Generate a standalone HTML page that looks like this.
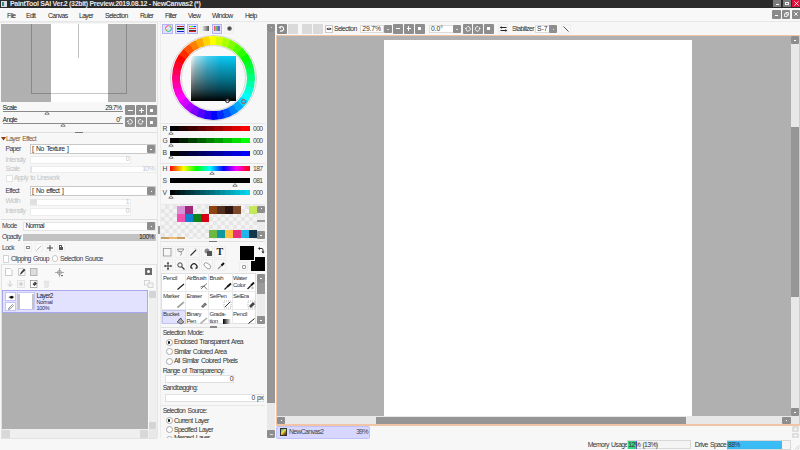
<!DOCTYPE html>
<html><head><meta charset="utf-8">
<style>
*{box-sizing:border-box}
html,body{margin:0;padding:0}
body{width:800px;height:450px;overflow:hidden;position:relative;background:#f7f7f7;font-family:"Liberation Sans",sans-serif}
.a{position:absolute}
.t{position:absolute;font-size:6.8px;line-height:8.6px;letter-spacing:-0.6px;word-spacing:1px;white-space:nowrap;color:#1e1e1e}
.r{text-align:right}
.d{color:#c4c4c4}
.gb{position:absolute;background:#8e8e8e;border-radius:1px}
.lb{position:absolute;background:#dcdcdc;border-radius:1px}
.sel{position:absolute;background:#e0e0ff;border:1px solid #b4b4f4}
.box{position:absolute;background:#fff;border:1px solid #d4d4d4}
.sep{position:absolute;height:1px;background:#dedede}
svg{position:absolute;overflow:visible}
</style></head><body>

<!-- TITLE BAR -->
<div class="a" style="left:0;top:0;width:800px;height:8px;background:#2b2b2b"></div>
<div class="a" style="left:1px;top:1px;width:6px;height:6px;background:#d8dde4"></div>
<div class="a" style="left:2px;top:2px;width:2px;height:4px;background:#3c8a8c"></div>
<div class="t" style="left:10px;top:0px;color:#e8e8e8;font-size:7px;font-weight:bold;letter-spacing:-0.31px;word-spacing:0;line-height:8px">PaintTool SAI Ver.2 (32bit) Preview.2019.08.12 - NewCanvas2 (*)</div>
<div class="a" style="left:773px;top:0;width:8px;height:7px;background:#7c7c7c"></div>
<div class="a" style="left:776px;top:4px;width:2.5px;height:1px;background:#fff"></div>
<div class="a" style="left:782.5px;top:0;width:8.5px;height:7px;background:#7c7c7c"></div>
<div class="a" style="left:785px;top:1.5px;width:4px;height:3.5px;border:0.9px solid #f0f0f0"></div>
<div class="a" style="left:792px;top:0;width:8px;height:7px;background:#e0103c"></div>
<svg style="left:794px;top:1px" width="5" height="5"><path d="M0.5 0.5 L4.5 4.5 M4.5 0.5 L0.5 4.5" stroke="#fff" stroke-width="0.9"/></svg>
<!-- MENU BAR -->
<div class="a" style="left:0;top:8px;width:800px;height:13px;background:#f8f8f8"></div>
<div class="a" style="left:0;top:21px;width:800px;height:1px;background:#e8e8e8"></div>
<div class="t" style="left:7px;top:11.5px">File</div>
<div class="t" style="left:26px;top:11.5px">Edit</div>
<div class="t" style="left:48px;top:11.5px">Canvas</div>
<div class="t" style="left:79px;top:11.5px">Layer</div>
<div class="t" style="left:105px;top:11.5px">Selection</div>
<div class="t" style="left:140px;top:11.5px">Ruler</div>
<div class="t" style="left:165px;top:11.5px">Filter</div>
<div class="t" style="left:188px;top:11.5px">View</div>
<div class="t" style="left:212px;top:11.5px">Window</div>
<div class="t" style="left:245px;top:11.5px">Help</div>
<div class="gb" style="left:772.3px;top:10px;width:8.5px;height:8.7px;background:#8a8a8a"></div>
<div class="a" style="left:775px;top:15px;width:3px;height:1px;background:#fff"></div>
<div class="gb" style="left:782px;top:10px;width:8px;height:8.7px;background:#8a8a8a"></div>
<svg style="left:783.5px;top:11.5px" width="5" height="5"><path d="M0.5 1.8 H3.2 V4.5 H0.5 Z M1.8 1.8 V0.5 H4.5 V3.2 H3.2" fill="none" stroke="#fff" stroke-width="0.8"/></svg>
<div class="gb" style="left:792px;top:10px;width:8px;height:8.7px;background:#8a8a8a"></div>
<svg style="left:794px;top:12.3px" width="4" height="4"><path d="M0.3 0.3 L3.7 3.7 M3.7 0.3 L0.3 3.7" stroke="#fff" stroke-width="0.9"/></svg>

<!-- LEFT PANEL -->

<!-- navigator -->
<div class="a" style="left:0;top:22px;width:158px;height:1px;background:#ececec"></div>
<div class="a" style="left:1px;top:24px;width:155px;height:78px;background:#b0b0b0;overflow:hidden">
  <div class="a" style="left:50px;top:0;width:57px;height:79px;background:#fff"></div>
  <div class="a" style="left:30px;top:-5px;width:96px;height:75px;border:1px solid rgba(0,0,0,0.22)"></div>
  <div class="a" style="left:77px;top:0;width:1px;height:34px;background:rgba(0,0,0,0.25)"></div>
</div>
<div class="t" style="left:2.5px;top:103.5px">Scale</div>
<div class="t r" style="left:88.5px;width:33px;top:103.5px">29.7%</div>
<div class="a" style="left:2.5px;top:111px;width:120px;height:1px;background:#8a8a8a"></div>
<svg style="left:44px;top:111px" width="6" height="4"><path d="M0.8 3.2 L3 0.6 L5.2 3.2 Z" fill="#fff" stroke="#444" stroke-width="0.7"/></svg>
<div class="gb" style="left:125px;top:105px;width:10px;height:10px"></div>
<div class="a" style="left:128px;top:109.5px;width:5px;height:1px;background:#fff"></div>
<div class="gb" style="left:136px;top:105px;width:10px;height:10px"></div>
<div class="a" style="left:139px;top:109.5px;width:5px;height:1.2px;background:#fff"></div>
<div class="a" style="left:141px;top:107.5px;width:1.2px;height:5px;background:#fff"></div>
<div class="gb" style="left:147px;top:105px;width:10px;height:10px"></div>
<div class="a" style="left:150px;top:108.5px;width:3px;height:3px;background:#fff"></div>
<div class="t" style="left:2.5px;top:115.5px">Angle</div>
<div class="t r" style="left:88.5px;width:33px;top:115.5px">0°</div>
<div class="a" style="left:2.5px;top:123px;width:120px;height:1px;background:#8a8a8a"></div>
<svg style="left:60px;top:123px" width="6" height="4"><path d="M0.8 3.2 L3 0.6 L5.2 3.2 Z" fill="#fff" stroke="#444" stroke-width="0.7"/></svg>
<div class="gb" style="left:125px;top:117px;width:10px;height:10px"></div>
<svg style="left:125px;top:117px" width="10" height="10"><path d="M4.4 2.6 A2.3 2.3 0 1 1 3.2 6.3" fill="none" stroke="#fff" stroke-width="0.9"/><path d="M1.8 4.5 L3.6 3 L3.6 6Z" fill="#fff"/></svg>
<div class="gb" style="left:136px;top:117px;width:10px;height:10px"></div>
<svg style="left:136px;top:117px" width="10" height="10"><path d="M5.1 2.6 A2.3 2.3 0 1 0 6.3 6.3" fill="none" stroke="#fff" stroke-width="0.9"/><path d="M7.7 4.5 L5.9 3 L5.9 6Z" fill="#fff"/></svg>
<div class="gb" style="left:147px;top:117px;width:10px;height:10px"></div>
<div class="a" style="left:150px;top:120.5px;width:3px;height:3px;background:#fff"></div>

<div class="sep" style="left:1px;top:132px;width:156px"></div>
<div class="a" style="left:75px;top:131.5px;width:8px;height:1.5px;background:#777"></div>

<!-- layer effect -->
<svg style="left:1px;top:137px" width="5" height="4"><path d="M0 0 L5 0 L2.5 3.5 Z" fill="#8b3a10"/></svg>
<div class="t" style="left:6px;top:134.6px;color:#8a5a30">Layer Effect</div>
<div class="t" style="left:5.5px;top:144.6px;color:#3a3a4a">Paper</div>
<div class="box" style="left:29.5px;top:144px;width:126px;height:9.5px;border-color:#c8c8c8"></div>
<div class="t" style="left:32px;top:144.6px;word-spacing:1.5px">[ No Texture ]</div>
<div class="gb" style="left:147px;top:145px;width:8px;height:8px"></div>
<div class="a" style="left:150px;top:148.5px;width:2px;height:1px;background:#fff"></div>
<div class="t d" style="left:5.5px;top:155.5px">Intensity</div>
<div class="box" style="left:29.5px;top:156px;width:101px;height:7.5px;border-color:#ececec"></div>
<div class="t d r" style="left:110px;width:19px;top:155px">0</div>
<div class="t d" style="left:5.5px;top:164.5px">Scale</div>
<div class="box" style="left:29.5px;top:165.5px;width:126px;height:7.5px;border-color:#ececec"></div>
<div class="a" style="left:30px;top:166px;width:2px;height:6.5px;background:#e4e4e4"></div>
<div class="t d r" style="left:130px;width:24px;top:164.5px">10%</div>
<div class="box" style="left:5.5px;top:174.5px;width:7px;height:7.5px;border-color:#e4e4e4"></div>
<div class="t d" style="left:14px;top:174px">Apply to Linework</div>

<div class="t" style="left:5.5px;top:187.3px;color:#3a3a4a">Effect</div>
<div class="box" style="left:29.5px;top:186px;width:126px;height:10px;border-color:#c8c8c8"></div>
<div class="t" style="left:32px;top:187.3px;word-spacing:1.5px">[ No effect ]</div>
<div class="gb" style="left:147px;top:187px;width:8px;height:8px"></div>
<div class="a" style="left:150.5px;top:190.5px;width:1.5px;height:1px;background:#fff"></div>
<div class="t d" style="left:5.5px;top:197.2px">Width</div>
<div class="box" style="left:29.5px;top:198.5px;width:101px;height:7px;border-color:#ececec"></div>
<div class="a" style="left:30px;top:199px;width:6.5px;height:6px;background:#e0e0e0"></div>
<div class="t d r" style="left:110px;width:19px;top:197.5px">1</div>
<div class="t d" style="left:5.5px;top:207.3px">Intensity</div>
<div class="box" style="left:29.5px;top:208px;width:101px;height:7.5px;border-color:#ececec"></div>
<div class="t d r" style="left:110px;width:19px;top:207px">0</div>

<div class="sep" style="left:1px;top:219px;width:156px"></div>
<div class="t" style="left:2px;top:222px;color:#3a3a4a">Mode</div>
<div class="box" style="left:23px;top:221.5px;width:132.5px;height:9px;border-color:#e4e4e4"></div>
<div class="t" style="left:25.5px;top:222px">Normal</div>
<div class="gb" style="left:147px;top:222px;width:8px;height:8px"></div>
<div class="a" style="left:150.5px;top:225.5px;width:1.5px;height:1px;background:#fff"></div>
<div class="t" style="left:2px;top:232.6px;color:#3a3a4a">Opacity</div>
<div class="a" style="left:23px;top:234px;width:132.5px;height:6.5px;background:#c2c2c2"></div>
<div class="t r" style="left:120px;width:34px;top:233px">100%</div>
<div class="t" style="left:2px;top:243.6px;color:#3a3a4a">Lock</div>
<div class="a" style="left:23.5px;top:243px;width:8px;height:9px;border:1px solid #eee;background:#f9f9f9"></div>
<div class="a" style="left:34.5px;top:243px;width:8.5px;height:9px;border:1px solid #eee;background:#f9f9f9"></div>
<div class="a" style="left:45.5px;top:243px;width:9px;height:9px;border:1px solid #eee;background:#f9f9f9"></div>
<div class="a" style="left:56.5px;top:243px;width:8.5px;height:9px;border:1px solid #eee;background:#f9f9f9"></div>
<div class="a" style="left:25.5px;top:245.5px;width:4px;height:3px;border:1px solid #888"></div>
<svg style="left:36px;top:244.5px" width="6" height="6"><path d="M0.5 5.5 L5 1" stroke="#bbb" stroke-width="1"/></svg>
<svg style="left:47px;top:244.5px" width="6" height="6"><path d="M3 0 V6 M0 3 H6" stroke="#333" stroke-width="0.9"/></svg>
<div class="a" style="left:58.5px;top:247px;width:4px;height:3px;background:#555"></div>
<div class="a" style="left:59.3px;top:245px;width:2.5px;height:3px;border:1px solid #555;border-bottom:none;border-radius:1px 1px 0 0"></div>
<div class="box" style="left:2.5px;top:254.5px;width:6.5px;height:8px;border-color:#d4d4d4"></div>
<div class="t" style="left:11px;top:254.6px;color:#3a3a4a">Clipping Group</div>
<div class="a" style="left:51.5px;top:255px;width:6.5px;height:6.5px;border:1px solid #c8c8c8;border-radius:50%;background:#fff"></div>
<div class="t" style="left:60px;top:254.6px;color:#3a3a4a">Selection Source</div>
<div class="sep" style="left:1px;top:264px;width:156px;background:#e2e2e2"></div>

<!-- layer toolbar -->
<div class="a" style="left:1px;top:264.5px;width:156px;height:174px;border:1px solid #e2e2e2;border-top:none;background:#f9f9f9"></div>
<svg style="left:5px;top:268px" width="8" height="8"><path d="M0.5 0.5 H5 L7 2.5 V7.5 H0.5 Z" fill="#fff" stroke="#aaa" stroke-width="0.6"/></svg>
<svg style="left:17.5px;top:268px" width="8" height="8"><path d="M0.5 0.5 H5 L7 2.5 V7.5 H0.5 Z" fill="#fff" stroke="#aaa" stroke-width="0.6"/><path d="M1.5 7 L3 4 L6 0.5 L7.5 2 L4 5.5 Z" fill="#444"/></svg>
<svg style="left:30px;top:268px" width="8" height="8"><rect x="0.5" y="0.5" width="6.5" height="7" fill="#ddd" stroke="#aaa" stroke-width="0.8"/></svg>
<svg style="left:55px;top:267.5px" width="9" height="9"><path d="M4.5 0 V9 M0 4.5 H9" stroke="#999" stroke-width="0.8"/><circle cx="4.5" cy="4.5" r="2" fill="none" stroke="#888" stroke-width="0.8"/><path d="M6 7 L8 7 L7 8.5Z" fill="#222"/></svg>
<div class="a" style="left:145px;top:268px;width:7px;height:7px;background:#6a6a6a"></div>
<div class="a" style="left:147px;top:270px;width:3px;height:3px;background:#fff;border-radius:50%"></div>
<svg style="left:5.5px;top:279.5px" width="8" height="8"><path d="M4 0.5 V6 M1.5 4 L4 6.5 L6.5 4" stroke="#ccc" stroke-width="1" fill="none"/></svg>
<svg style="left:17px;top:279.5px" width="8" height="8"><rect x="0.5" y="0.5" width="7" height="7" fill="#f4f4f4" stroke="#e0e0e0" stroke-width="0.8"/><path d="M4 2 V6 M2 4 H6" stroke="#bbb" stroke-width="0.8"/></svg>
<svg style="left:30px;top:279.5px" width="8" height="8"><rect x="0.5" y="0.5" width="6.5" height="7" fill="#fff" stroke="#777" stroke-width="0.6"/><path d="M2.5 4 L5 1.5 L7 3.5 L4.5 6 Z" fill="#333"/><path d="M3.5 4 L5 2.5" stroke="#fff" stroke-width="0.5"/></svg>
<svg style="left:42.5px;top:279.5px" width="8" height="8"><path d="M0.5 1.3 H6.5" stroke="#ddd" stroke-width="0.8"/><path d="M1.2 2 L1.8 7.5 H5.2 L5.8 2 Z" fill="#e8e8e8" stroke="#dcdcdc" stroke-width="0.5"/></svg>
<svg style="left:144px;top:279.5px" width="10" height="8"><rect x="0.5" y="0.5" width="5" height="4.5" fill="none" stroke="#ccc" stroke-width="0.8"/><rect x="4" y="3" width="5" height="4.5" fill="#f4f4f4" stroke="#ccc" stroke-width="0.8"/></svg>

<!-- layer list -->
<div class="a" style="left:2px;top:290px;width:146px;height:139px;background:#b0b0b0"></div>
<div class="a" style="left:2px;top:290px;width:146px;height:23px;background:#e2e2ff;border:1px solid #a8a8ee"></div>
<div class="a" style="left:5px;top:292.3px;width:10.7px;height:8.5px;background:#fff;border:1.3px solid #c4c4f8"></div>
<svg style="left:7.5px;top:294.5px" width="7" height="5"><path d="M0.3 2.3 Q3 -0.8 6.5 2 Q3.5 5 0.3 2.3Z" fill="#777"/><circle cx="3.6" cy="2.3" r="1.3" fill="#000"/></svg>
<div class="a" style="left:5px;top:302px;width:10.7px;height:8.5px;background:#fff;border:1.3px solid #c4c4f8"></div>
<svg style="left:7.5px;top:303.5px" width="6" height="6"><path d="M0.5 5.5 L1 4 L4.5 0.5 L5.5 1.5 L2 5 Z" fill="none" stroke="#666" stroke-width="0.7"/></svg>
<div class="a" style="left:17px;top:292.2px;width:17.7px;height:18px;background:#fff;border:1.3px solid #c4c4f8"></div>
<div class="a" style="left:18.2px;top:293.5px;width:1.7px;height:15.5px;background:#c4c4c4"></div>
<div class="a" style="left:32px;top:293.5px;width:1.5px;height:15.5px;background:#c4c4c4"></div>
<div class="t" style="left:36.5px;top:292px;color:#1e1e3a;font-size:6.5px">Layer2</div>
<div class="t" style="left:36.5px;top:298px;color:#2a2a5a;font-size:5.5px;letter-spacing:-0.3px">Normal</div>
<div class="t" style="left:36.5px;top:303.5px;color:#2a2a5a;font-size:5.5px;letter-spacing:-0.3px">100%</div>

<!-- layer scrollbars -->
<div class="a" style="left:148.5px;top:290px;width:8px;height:139px;background:#efefef"></div>
<div class="lb" style="left:149px;top:290.5px;width:7px;height:7px;background:#d4d4d4"></div>
<div class="lb" style="left:149px;top:421.5px;width:7px;height:7px;background:#d4d4d4"></div>
<div class="a" style="left:2px;top:429px;width:146.5px;height:9px;background:#efefef"></div>
<div class="lb" style="left:2px;top:429.5px;width:8px;height:8px;background:#d8d8d8"></div>
<div class="lb" style="left:140px;top:429.5px;width:8px;height:8px;background:#d8d8d8"></div>
<div class="a" style="left:148.5px;top:429px;width:8px;height:9px;background:#e8e8e8"></div>


<!-- MIDDLE PANEL -->

<div class="a" style="left:157px;top:22px;width:1px;height:416px;background:#e6e6e6"></div>
<div class="a" style="left:158px;top:226px;width:2px;height:8px;background:#999"></div>
<div class="a" style="left:160px;top:22px;width:1px;height:416px;background:#ececec"></div>

<!-- color mode buttons -->
<div class="sel" style="left:162.3px;top:23.5px;width:11.2px;height:10px"></div>
<svg style="left:164.5px;top:25px" width="7" height="7"><circle cx="3.5" cy="3.5" r="2.9" fill="none" stroke="url(#cg)" stroke-width="0.9"/><defs><linearGradient id="cg" x1="0" x2="1" y1="0" y2="1"><stop offset="0" stop-color="#f0f"/><stop offset="0.3" stop-color="#f60"/><stop offset="0.6" stop-color="#0d0"/><stop offset="1" stop-color="#08f"/></linearGradient></defs></svg>
<div class="sel" style="left:174.8px;top:23.5px;width:10.7px;height:10px"></div>
<div class="a" style="left:177px;top:25.5px;width:6.5px;height:1.5px;background:#b02020"></div>
<div class="a" style="left:177px;top:27.5px;width:6.5px;height:1.5px;background:#111"></div>
<div class="a" style="left:177px;top:29px;width:6.5px;height:1.3px;background:#20b020"></div>
<div class="a" style="left:177px;top:30.5px;width:6.5px;height:1.3px;background:#1020d0"></div>
<div class="sel" style="left:187px;top:23.5px;width:11px;height:10px"></div>
<div class="a" style="left:189px;top:25.5px;width:7px;height:1.5px;background:linear-gradient(90deg,#f00,#ff0,#0f0,#0ff,#00f,#f0f)"></div>
<div class="a" style="left:189px;top:27.5px;width:7px;height:1.5px;background:#e04040"></div>
<div class="a" style="left:189px;top:29.5px;width:7px;height:1.5px;background:#333"></div>
<div class="a" style="left:189px;top:31px;width:7px;height:1px;background:#e02020"></div>
<div class="a" style="left:199.5px;top:23.5px;width:11px;height:10px;background:#f4f4f4;border:1px solid #f0f0f0"></div>
<div class="a" style="left:201.5px;top:26px;width:7px;height:5px;background:linear-gradient(90deg,#eee,#555)"></div>
<div class="sel" style="left:211.5px;top:23.5px;width:10.5px;height:10px"></div>
<div class="a" style="left:213.5px;top:25.5px;width:6.5px;height:5.5px;background:linear-gradient(90deg,#e04080,#e0a040,#40c080,#6060e0,#e040a0)"></div>
<div class="a" style="left:224px;top:23.5px;width:10px;height:10px;background:#f6f6f6;border:1px solid #f0f0f0"></div>
<div class="a" style="left:226.5px;top:26px;width:5px;height:5px;background:radial-gradient(circle,#333 0%,#666 45%,#ccc 80%,transparent 100%);border-radius:50%"></div>

<!-- color wheel -->
<div class="a" style="left:170.00px;top:34.80px;width:86.6px;height:86.6px;border-radius:50%;border:1px solid #d4d4d4;background:#fbfbfb"></div>
<div class="a" style="left:171.50px;top:36.30px;width:83.60px;height:83.60px;border-radius:50%;background:conic-gradient(from -65.8deg,#ff0000 0deg 10deg,#ff2a00 10deg 20deg,#ff5400 20deg 30deg,#ff7f00 30deg 40deg,#ffaa00 40deg 50deg,#ffd400 50deg 60deg,#ffff00 60deg 70deg,#d4ff00 70deg 80deg,#aaff00 80deg 90deg,#7fff00 90deg 100deg,#54ff00 100deg 110deg,#2aff00 110deg 120deg,#00ff00 120deg 130deg,#00ff2a 130deg 140deg,#00ff55 140deg 150deg,#00ff7f 150deg 160deg,#00ffa9 160deg 170deg,#00ffd4 170deg 180deg,#00ffff 180deg 190deg,#00d4ff 190deg 200deg,#00a9ff 200deg 210deg,#007fff 210deg 220deg,#0054ff 220deg 230deg,#002aff 230deg 240deg,#0000ff 240deg 250deg,#2a00ff 250deg 260deg,#5400ff 260deg 270deg,#7f00ff 270deg 280deg,#aa00ff 280deg 290deg,#d400ff 290deg 300deg,#ff00ff 300deg 310deg,#ff00d4 310deg 320deg,#ff00aa 320deg 330deg,#ff007f 330deg 340deg,#ff0055 340deg 350deg,#ff002a 350deg 360deg)"></div>
<div class="a" style="left:180.00px;top:44.80px;width:66.60px;height:66.60px;border-radius:50%;background:#fbfbfb"></div>
<div class="a" style="left:180.60px;top:45.40px;width:65.4px;height:65.4px;border-radius:50%;border:1px solid #d4d4d4;background:#f9f9f9"></div>
<div class="a" style="left:190.5px;top:55.5px;width:45.5px;height:45.5px;background:linear-gradient(to bottom,rgba(0,0,0,0) 0%,rgba(0,0,0,0.22) 25%,rgba(0,0,0,0.42) 50%,rgba(0,0,0,0.66) 75%,#000 100%),linear-gradient(to right,#fff 0%,#b0e6f2 10%,#50d0f0 35%,#10c8f4 65%,#00cef8 100%)"></div>
<div class="a" style="left:224.5px;top:97.5px;width:5px;height:5px;border:1px solid #111;border-radius:50%;background:rgba(255,255,255,0.4)"></div>
<div class="a" style="left:241px;top:98.5px;width:5px;height:5px;border:1.2px solid #c04848;border-radius:50%"></div>

<div class="sep" style="left:161px;top:123px;width:104px;background:#e4e4e4"></div>
<div class="t" style="left:162.5px;top:124.5px;color:#444">R</div>
<div class="a" style="left:170px;top:126px;width:80px;height:5px;background:linear-gradient(90deg,#000000 0.0% 11.1%,#200000 11.1% 22.2%,#400000 22.2% 33.3%,#600000 33.3% 44.4%,#800000 44.4% 55.6%,#9f0000 55.6% 66.7%,#bf0000 66.7% 77.8%,#df0000 77.8% 88.9%,#ff0000 88.9% 100.0%)"></div>
<svg style="left:168px;top:130.8px" width="6" height="4"><path d="M0.8 3.2 L3 0.6 L5.2 3.2 Z" fill="#fff" stroke="#444" stroke-width="0.7"/></svg>
<div class="t" style="left:253px;top:124.5px;color:#444">000</div>
<div class="t" style="left:162.5px;top:136.5px;color:#444">G</div>
<div class="a" style="left:170px;top:138px;width:80px;height:5px;background:linear-gradient(90deg,#000000 0.0% 11.1%,#002000 11.1% 22.2%,#004000 22.2% 33.3%,#006000 33.3% 44.4%,#008000 44.4% 55.6%,#009f00 55.6% 66.7%,#00bf00 66.7% 77.8%,#00df00 77.8% 88.9%,#00ff00 88.9% 100.0%)"></div>
<svg style="left:168px;top:142.8px" width="6" height="4"><path d="M0.8 3.2 L3 0.6 L5.2 3.2 Z" fill="#fff" stroke="#444" stroke-width="0.7"/></svg>
<div class="t" style="left:253px;top:136.5px;color:#444">000</div>
<div class="t" style="left:162.5px;top:148.5px;color:#444">B</div>
<div class="a" style="left:170px;top:150.5px;width:80px;height:5px;background:linear-gradient(90deg,#000000 0.0% 11.1%,#000020 11.1% 22.2%,#000040 22.2% 33.3%,#000060 33.3% 44.4%,#000080 44.4% 55.6%,#00009f 55.6% 66.7%,#0000bf 66.7% 77.8%,#0000df 77.8% 88.9%,#0000ff 88.9% 100.0%)"></div>
<svg style="left:168px;top:155px" width="6" height="4"><path d="M0.8 3.2 L3 0.6 L5.2 3.2 Z" fill="#fff" stroke="#444" stroke-width="0.7"/></svg>
<div class="t" style="left:253px;top:148.5px;color:#444">000</div>

<div class="sep" style="left:161px;top:163px;width:104px;background:#e4e4e4"></div>
<div class="t" style="left:162.5px;top:164.5px;color:#444">H</div>
<div class="a" style="left:170px;top:166.2px;width:80px;height:4.8px;background:linear-gradient(90deg,#f00,#ff0 17%,#0f0 33%,#0ff 50%,#00f 67%,#f0f 83%,#f00)"></div>
<svg style="left:209px;top:171.2px" width="6" height="4"><path d="M0.8 3.2 L3 0.6 L5.2 3.2 Z" fill="#fff" stroke="#444" stroke-width="0.7"/></svg>
<div class="t" style="left:253px;top:164.5px;color:#444">187</div>
<div class="t" style="left:162.5px;top:176.5px;color:#444">S</div>
<div class="a" style="left:170px;top:178.2px;width:80px;height:4.8px;background:#000"></div>
<svg style="left:232px;top:183.2px" width="6" height="4"><path d="M0.8 3.2 L3 0.6 L5.2 3.2 Z" fill="#fff" stroke="#444" stroke-width="0.7"/></svg>
<div class="t" style="left:253px;top:176.5px;color:#444">081</div>
<div class="t" style="left:162.5px;top:188.5px;color:#444">V</div>
<div class="a" style="left:170px;top:190.2px;width:80px;height:4.8px;background:linear-gradient(90deg,#000607 0.00% 6.25%,#001416 6.25% 12.50%,#002226 12.50% 18.75%,#003035 18.75% 25.00%,#003d44 25.00% 31.25%,#004b53 31.25% 37.50%,#005963 37.50% 43.75%,#006772 43.75% 50.00%,#007481 50.00% 56.25%,#008290 56.25% 62.50%,#0090a0 62.50% 68.75%,#009eaf 68.75% 75.00%,#00abbe 75.00% 81.25%,#00b9cd 81.25% 87.50%,#00c7dd 87.50% 93.75%,#00d5ec 93.75% 100.00%)"></div>
<svg style="left:168px;top:195.2px" width="6" height="4"><path d="M0.8 3.2 L3 0.6 L5.2 3.2 Z" fill="#fff" stroke="#444" stroke-width="0.7"/></svg>
<div class="t" style="left:253px;top:188.5px;color:#444">000</div>

<!-- palette -->
<div class="a" style="left:161px;top:204px;width:104px;height:1px;background:#e8e8e8"></div>
<div class="a" style="left:161px;top:205px;width:96px;height:34px;background-color:#f4f4f4;background-image:linear-gradient(45deg,#e6e6e6 25%,transparent 25%,transparent 75%,#e6e6e6 75%),linear-gradient(45deg,#e6e6e6 25%,transparent 25%,transparent 75%,#e6e6e6 75%);background-size:8px 8px;background-position:0 0,4px 4px"></div>
<div class="a" style="left:177px;top:205.5px;width:8px;height:8px;background:#d890d8"></div>
<div class="a" style="left:185px;top:205.5px;width:8px;height:8px;background:#a02878"></div>
<div class="a" style="left:209px;top:205.5px;width:8px;height:8px;background:#8c4414"></div>
<div class="a" style="left:217px;top:205.5px;width:8px;height:8px;background:#523020"></div>
<div class="a" style="left:225px;top:205.5px;width:8px;height:8px;background:#2e1410"></div>
<div class="a" style="left:233px;top:205.5px;width:8px;height:8px;background:#80482a"></div>
<div class="a" style="left:249px;top:205.5px;width:8px;height:8px;background:#c4e858"></div>
<div class="a" style="left:177px;top:213.5px;width:8px;height:8px;background:#f050b0"></div>
<div class="a" style="left:185px;top:213.5px;width:8px;height:8px;background:#1080d0"></div>
<div class="a" style="left:193px;top:213.5px;width:8px;height:8px;background:#108418"></div>
<div class="a" style="left:201px;top:213.5px;width:8px;height:8px;background:#d80014"></div>
<div class="a" style="left:209px;top:229.5px;width:8px;height:8px;background:#6cb840"></div>
<div class="a" style="left:217px;top:229.5px;width:8px;height:8px;background:#1098a0"></div>
<div class="a" style="left:225px;top:229.5px;width:8px;height:8px;background:#ffc040"></div>
<div class="a" style="left:233px;top:229.5px;width:8px;height:8px;background:#e83078"></div>
<div class="a" style="left:241px;top:229.5px;width:8px;height:8px;background:#20b4ec"></div>
<div class="a" style="left:249px;top:229.5px;width:8px;height:8px;background:#10384a"></div>
<div class="a" style="left:161px;top:237px;width:8px;height:2px;background:#c8a060"></div>
<div class="a" style="left:169px;top:237px;width:8px;height:2px;background:#f0b870"></div>
<div class="a" style="left:177px;top:237px;width:8px;height:2px;background:#c8a060"></div>
<div class="a" style="left:257px;top:205px;width:8px;height:34px;background:#ececec"></div>
<div class="gb" style="left:257px;top:205.5px;width:8px;height:7.5px"></div>
<div class="a" style="left:260.5px;top:208px;width:1px;height:1px;background:#fff"></div>
<div class="a" style="left:257px;top:219.5px;width:8px;height:2.5px;background:#9a9a9a"></div>
<div class="gb" style="left:257px;top:231px;width:8px;height:8px"></div>
<div class="a" style="left:260px;top:234.5px;width:2px;height:1px;background:#fff"></div>
<div class="a" style="left:161px;top:241px;width:104px;height:1px;background:#e0e0e0"></div>
<div class="a" style="left:209px;top:240.5px;width:8px;height:1.5px;background:#777"></div>

<!-- tools -->
<div class="a" style="left:161.5px;top:245.5px;width:11.5px;height:12.5px;border:1px solid #eee"></div>
<div class="a" style="left:175px;top:245.5px;width:11.5px;height:12.5px;border:1px solid #eee"></div>
<div class="a" style="left:188px;top:245.5px;width:12px;height:12.5px;border:1px solid #eee"></div>
<div class="a" style="left:201px;top:245.5px;width:12px;height:12.5px;border:1px solid #eee"></div>
<div class="a" style="left:214px;top:245.5px;width:12px;height:12.5px;border:1px solid #eee"></div>
<div class="a" style="left:161.5px;top:259.3px;width:11.5px;height:12.2px;border:1px solid #eee"></div>
<div class="a" style="left:175px;top:259.3px;width:11.5px;height:12.2px;border:1px solid #eee"></div>
<div class="a" style="left:188px;top:259.3px;width:12px;height:12.2px;border:1px solid #eee"></div>
<div class="a" style="left:201px;top:259.3px;width:12px;height:12.2px;border:1px solid #eee"></div>
<div class="a" style="left:214px;top:259.3px;width:12px;height:12.2px;border:1px solid #eee"></div>
<svg style="left:163px;top:248px" width="9" height="9"><rect x="0.5" y="0.5" width="7.5" height="7.5" fill="none" stroke="#888" stroke-width="0.7"/></svg>
<svg style="left:177px;top:248px" width="8" height="8"><path d="M0.5 1 H7 L5 3.5 H1.5 Z M4 4 Q5 6 3.5 7.5" fill="none" stroke="#777" stroke-width="0.8"/></svg>
<svg style="left:190px;top:248px" width="8" height="8"><path d="M0.5 7.5 L6 2" stroke="#333" stroke-width="1.1"/><path d="M6 0 V1.5 M7.5 2 H6.5 M5 1 L4.5 0.5" stroke="#aaa" stroke-width="0.6"/></svg>
<svg style="left:203.5px;top:248px" width="8" height="8"><circle cx="3" cy="3" r="2.5" fill="#888"/><rect x="3" y="3" width="5" height="5" fill="#555"/></svg>
<div class="t" style="left:216.5px;top:246px;font-family:'Liberation Serif',serif;font-size:10px;line-height:12px;font-weight:bold;color:#222;letter-spacing:0">T</div>
<svg style="left:163.5px;top:261.5px" width="8" height="8"><path d="M4 0.5 V7.5 M0.5 4 H7.5" stroke="#222" stroke-width="0.8"/><path d="M4 0 L2.7 1.5 H5.3Z M4 8 L2.7 6.5 H5.3Z M0 4 L1.5 2.7 V5.3Z M8 4 L6.5 2.7 V5.3Z" fill="#222"/></svg>
<svg style="left:177px;top:261.5px" width="8" height="8"><circle cx="3" cy="3" r="2.2" fill="none" stroke="#444" stroke-width="1"/><path d="M4.6 4.6 L7.5 7.5" stroke="#333" stroke-width="1.3"/></svg>
<svg style="left:190px;top:261.5px" width="8" height="8"><path d="M1.5 6.5 A3 3 0 1 1 6.5 6.5" fill="none" stroke="#222" stroke-width="1.2"/><path d="M0.5 5.5 H2.5 V7.5 Z M7.5 5.5 H5.5 V7.5Z" fill="#222"/></svg>
<svg style="left:203px;top:261px" width="9" height="9"><path d="M1 3 Q2 1 4 2 L7 4 Q8.5 6 7 7.5 Q5 8.5 3.5 7 L1 4Z" fill="#fff" stroke="#777" stroke-width="0.7"/></svg>
<svg style="left:217px;top:261.5px" width="8" height="8"><path d="M1 7 L5 3" stroke="#999" stroke-width="1.4"/><path d="M4.5 3.5 L7 1" stroke="#111" stroke-width="2"/></svg>

<div class="a" style="left:250.5px;top:256.7px;width:14px;height:14px;background:#000"></div>
<div class="a" style="left:238.5px;top:245px;width:16px;height:15.5px;background:#000;border:1px solid #f7f7f7"></div>
<svg style="left:257.5px;top:246.5px" width="7" height="7"><path d="M1 1.5 H4 Q5 1.5 5 3 V5.5" fill="none" stroke="#222" stroke-width="0.9"/><path d="M0 1.5 L2 0 V3Z M5 6.5 L3.5 4.5 H6.5Z" fill="#222"/></svg>
<div class="a" style="left:239px;top:262px;width:9px;height:9px;border:1px solid #eee;background:#f8f8f8"></div>
<div class="a" style="left:241.5px;top:264.5px;width:4px;height:4px;border:1px solid #999;border-radius:1px"></div>

<!-- brush grid -->
<div class="a" style="left:161px;top:273px;width:95px;height:51px;background:#fff;border:1px solid #e0e0e0"></div>
<div class="a" style="left:185px;top:273px;width:1px;height:51px;background:#eaeaea"></div>
<div class="a" style="left:208px;top:273px;width:1px;height:51px;background:#eaeaea"></div>
<div class="a" style="left:231.5px;top:273px;width:1px;height:51px;background:#eaeaea"></div>
<div class="a" style="left:161px;top:291px;width:95px;height:1px;background:#eaeaea"></div>
<div class="a" style="left:161px;top:309px;width:95px;height:1px;background:#eaeaea"></div>
<div class="sel" style="left:161.5px;top:309.5px;width:24px;height:14.5px;border-color:#c4c4f4"></div>
<div class="t" style="left:163px;top:274px;color:#333;font-size:6px;letter-spacing:-0.4px">Pencil</div>
<div class="t" style="left:186.5px;top:274px;color:#333;font-size:6px;letter-spacing:-0.4px">AirBrush</div>
<div class="t" style="left:209.5px;top:274px;color:#333;font-size:6px;letter-spacing:-0.4px">Brush</div>
<div class="t" style="left:233px;top:274px;color:#333;font-size:6px;letter-spacing:-0.4px">Water</div>
<div class="t" style="left:233px;top:280.5px;color:#333;font-size:6px;letter-spacing:-0.4px">Color</div>
<div class="t" style="left:163px;top:292px;color:#333;font-size:6px;letter-spacing:-0.4px">Marker</div>
<div class="t" style="left:186.5px;top:292px;color:#333;font-size:6px;letter-spacing:-0.4px">Eraser</div>
<div class="t" style="left:209.5px;top:292px;color:#333;font-size:6px;letter-spacing:-0.4px">SelPen</div>
<div class="t" style="left:233px;top:292px;color:#333;font-size:6px;letter-spacing:-0.4px">SelEra</div>
<div class="t" style="left:163px;top:310px;color:#333;font-size:6px;letter-spacing:-0.4px">Bucket</div>
<div class="t" style="left:186.5px;top:310px;color:#333;font-size:6px;letter-spacing:-0.4px">Binary</div>
<div class="t" style="left:186.5px;top:316.5px;color:#333;font-size:6px;letter-spacing:-0.4px">Pen</div>
<div class="t" style="left:209.5px;top:310px;color:#333;font-size:6px;letter-spacing:-0.4px">Grada-</div>
<div class="t" style="left:209.5px;top:316.5px;color:#333;font-size:6px;letter-spacing:-0.4px">tion</div>
<div class="t" style="left:233px;top:310px;color:#333;font-size:6px;letter-spacing:-0.4px">Pencil</div>
<svg style="left:177px;top:283px" width="8" height="7"><path d="M0.5 6.5 L7 1" stroke="#222" stroke-width="1.2"/></svg>
<svg style="left:200px;top:283px" width="8" height="7"><path d="M0.5 4 L4 3 L7 0.5 M4 3 L7 6.5 M1 6 L4 3" stroke="#444" stroke-width="0.7" fill="none"/></svg>
<svg style="left:224px;top:283px" width="8" height="7"><path d="M0.5 6.5 L3 4" stroke="#222" stroke-width="1.2"/><path d="M3 4 L7 0.5" stroke="#111" stroke-width="1.8"/></svg>
<svg style="left:247px;top:282px" width="8" height="8"><path d="M0.5 7 L4 3.5" stroke="#222" stroke-width="1.2"/><path d="M4 3.5 L7 0.5" stroke="#111" stroke-width="1.8"/><circle cx="5.5" cy="6" r="1.2" fill="#bbb"/></svg>
<svg style="left:177px;top:301px" width="8" height="7"><path d="M0.5 6.5 L7 1" stroke="#666" stroke-width="1.5"/><path d="M0.5 6.5 L7 1" stroke="#fff" stroke-width="0.5"/></svg>
<svg style="left:200px;top:301px" width="8" height="7"><path d="M1 5.5 L5 1.5 L7 3.5 L3 7Z" fill="#666"/><path d="M2.5 4 L5 6 M3.5 3 L6 5" stroke="#ccc" stroke-width="0.5"/></svg>
<svg style="left:223px;top:300px" width="9" height="9"><rect x="1" y="1" width="7" height="7" fill="none" stroke="#888" stroke-width="0.6" stroke-dasharray="1 1"/><path d="M2 7 L7 2" stroke="#333" stroke-width="1"/></svg>
<svg style="left:247px;top:300px" width="9" height="9"><rect x="1" y="1" width="7" height="7" fill="none" stroke="#888" stroke-width="0.6" stroke-dasharray="1 1"/><path d="M2 6 L6 2 L8 4 L4 8Z" fill="#444"/></svg>
<svg style="left:176px;top:317px" width="9" height="7"><path d="M1 5 L4.5 1.5 L8 5 L5 7 Z" fill="#aaa" stroke="#444" stroke-width="0.7"/><path d="M2.5 3.5 Q4 0 6 2" fill="none" stroke="#333" stroke-width="0.6"/></svg>
<svg style="left:200px;top:317px" width="8" height="7"><path d="M0.5 6.5 L7 1" stroke="#888" stroke-width="1.5"/><path d="M0.5 6.5 L7 1" stroke="#fff" stroke-width="0.5"/></svg>
<div class="a" style="left:222.5px;top:318.5px;width:8px;height:5px;background:linear-gradient(90deg,#000,#fff)"></div>
<svg style="left:248px;top:318px" width="7" height="6"><path d="M0.5 5.5 L6.5 0.5" stroke="#222" stroke-width="1"/></svg>
<div class="a" style="left:256.7px;top:273.5px;width:8.5px;height:50.5px;background:#ececec"></div>
<div class="gb" style="left:256.7px;top:274px;width:8.5px;height:8.5px"></div>
<div class="a" style="left:260.2px;top:277.5px;width:1.5px;height:1px;background:#fff"></div>
<div class="a" style="left:256.7px;top:282.5px;width:8.5px;height:11.5px;background:#9a9a9a"></div>
<div class="gb" style="left:256.7px;top:315.5px;width:8.5px;height:8.5px"></div>
<div class="a" style="left:260.2px;top:319.5px;width:1.5px;height:1px;background:#fff"></div>
<div class="a" style="left:161px;top:326.5px;width:104px;height:1px;background:#e0e0e0"></div>
<div class="a" style="left:210px;top:326px;width:7px;height:1.5px;background:#888"></div>

<!-- tool options -->
<div class="t" style="left:162.7px;top:328.6px;color:#333">Selection Mode:</div>
<div class="a" style="left:165.5px;top:339px;width:7px;height:7px;border:1px solid #aaa;border-radius:50%;background:#fff"></div>
<div class="a" style="left:167.7px;top:341.2px;width:2.6px;height:2.6px;border-radius:50%;background:#111"></div>
<div class="t" style="left:174px;top:338px;color:#333">Enclosed Transparent Area</div>
<div class="a" style="left:165.5px;top:348.3px;width:7px;height:7px;border:1px solid #aaa;border-radius:50%;background:#fff"></div>
<div class="t" style="left:174px;top:347.5px;color:#333">Similar Colored Area</div>
<div class="a" style="left:165.5px;top:357.5px;width:7px;height:7px;border:1px solid #aaa;border-radius:50%;background:#fff"></div>
<div class="t" style="left:174px;top:357px;color:#333">All Similar Colored Pixels</div>
<div class="t" style="left:162.7px;top:366.6px;color:#333">Range of Transparency:</div>
<div class="box" style="left:165.3px;top:375px;width:69px;height:8px;border-color:#e0e0e0"></div>
<div class="t r" style="left:210px;width:23px;top:375px;color:#333">0</div>
<div class="t" style="left:162.7px;top:384px;color:#333">Sandbagging:</div>
<div class="box" style="left:165.3px;top:393.5px;width:99px;height:8px;border-color:#e0e0e0"></div>
<div class="t r" style="left:230px;width:33px;top:393.5px;color:#333">0 px</div>
<div class="a" style="left:161px;top:405px;width:104px;height:1px;background:#e8e8e8"></div>
<div class="t" style="left:162.7px;top:406.6px;color:#333">Selection Source:</div>
<div class="a" style="left:165.5px;top:417px;width:7px;height:7px;border:1px solid #aaa;border-radius:50%;background:#fff"></div>
<div class="a" style="left:167.7px;top:419.2px;width:2.6px;height:2.6px;border-radius:50%;background:#111"></div>
<div class="t" style="left:174px;top:416.6px;color:#333">Current Layer</div>
<div class="a" style="left:165.5px;top:426.3px;width:7px;height:7px;border:1px solid #aaa;border-radius:50%;background:#fff"></div>
<div class="t" style="left:174px;top:425.6px;color:#333">Specified Layer</div>
<div class="a" style="left:161px;top:434px;width:100px;height:4px;overflow:hidden">
 <div class="a" style="left:4.5px;top:1.5px;width:7px;height:7px;border:1px solid #aaa;border-radius:50%;background:#fff"></div>
 <div class="t" style="left:13px;top:0px;color:#333">Merged Layer</div>
</div>
<div class="a" style="left:157px;top:438px;width:118px;height:12px;background:#f7f7f7"></div>

<!-- middle scrollbar -->
<div class="a" style="left:267px;top:24px;width:8px;height:414px;background:#e8e8e8"></div>
<div class="gb" style="left:267px;top:24px;width:8px;height:7.5px"></div>
<div class="a" style="left:270.5px;top:27px;width:1px;height:1px;background:#ddd"></div>
<div class="a" style="left:267px;top:31.5px;width:8px;height:371.5px;background:#969696"></div>
<div class="gb" style="left:267px;top:430px;width:8px;height:8px"></div>
<div class="a" style="left:269.5px;top:434px;width:3px;height:1px;background:#ddd"></div>


<!-- CANVAS -->

<!-- canvas toolbar -->
<div class="gb" style="left:277px;top:24px;width:9.5px;height:9.5px;background:#8a8a8a"></div>
<svg style="left:277px;top:24px" width="10" height="10"><path d="M3.6 2.6 A2.3 2.3 0 1 1 3 6.7" fill="none" stroke="#fff" stroke-width="1.1"/><path d="M1.5 3.2 L4 2 L3.6 5Z" fill="#fff"/></svg>
<div class="lb" style="left:288px;top:24px;width:10px;height:9.5px;background:#dadada"></div>
<div class="lb" style="left:301.5px;top:24px;width:10px;height:9.5px;background:#dadada"></div>
<div class="lb" style="left:313px;top:24px;width:10px;height:9.5px;background:#dadada"></div>
<div class="a" style="left:325px;top:25px;width:7.5px;height:7.5px;background:#fff;border:1px solid #c8c8c8"></div>
<svg style="left:326px;top:27px" width="6" height="4"><path d="M0.3 2 Q3 -0.5 5.7 2 Q3 4.2 0.3 2Z" fill="#222"/><circle cx="3" cy="1.8" r="0.7" fill="#fff"/></svg>
<div class="t" style="left:334px;top:25px;color:#333">Selection</div>
<div class="box" style="left:360px;top:24.5px;width:24px;height:8.5px;border-color:#dcdcdc"></div>
<div class="t" style="left:362.3px;top:25px;color:#333;letter-spacing:-0.15px">29.7%</div>
<div class="gb" style="left:384px;top:25px;width:7.5px;height:8px"></div>
<div class="a" style="left:387px;top:28.5px;width:1.5px;height:1px;background:#ddd"></div>
<div class="gb" style="left:393px;top:24px;width:9.5px;height:9.5px"></div>
<div class="a" style="left:395.5px;top:28.3px;width:4.5px;height:1px;background:#fff"></div>
<div class="gb" style="left:404px;top:24px;width:9.5px;height:9.5px"></div>
<div class="a" style="left:406.5px;top:28.3px;width:4.5px;height:1px;background:#fff"></div>
<div class="a" style="left:408.2px;top:26.3px;width:1px;height:4.5px;background:#fff"></div>
<div class="gb" style="left:415px;top:24px;width:9.5px;height:9.5px"></div>
<div class="a" style="left:418.3px;top:27.3px;width:3px;height:3px;background:#fff"></div>

<div class="box" style="left:428.5px;top:24.5px;width:25px;height:8.5px;border-color:#dcdcdc"></div>
<div class="t" style="left:431px;top:25px;color:#333;letter-spacing:-0.1px">0.0°</div>
<div class="gb" style="left:453px;top:25px;width:7.5px;height:8px"></div>
<div class="a" style="left:456px;top:28.5px;width:1.5px;height:1px;background:#ddd"></div>
<div class="gb" style="left:462.5px;top:24px;width:9.5px;height:9.5px"></div>
<svg style="left:462.5px;top:24px" width="10" height="10"><path d="M4.4 2.6 A2.3 2.3 0 1 1 3.2 6.3" fill="none" stroke="#fff" stroke-width="0.9"/><path d="M1.8 4.5 L3.6 3 L3.6 6Z" fill="#fff"/></svg>
<div class="gb" style="left:473px;top:24px;width:9.5px;height:9.5px"></div>
<svg style="left:473px;top:24px" width="10" height="10"><path d="M5.1 2.6 A2.3 2.3 0 1 0 6.3 6.3" fill="none" stroke="#fff" stroke-width="0.9"/><path d="M7.7 4.5 L5.9 3 L5.9 6Z" fill="#fff"/></svg>
<div class="gb" style="left:484px;top:24px;width:9.5px;height:9.5px"></div>
<div class="a" style="left:487.3px;top:27.3px;width:3px;height:3px;background:#fff"></div>

<div class="a" style="left:497.5px;top:24px;width:10.5px;height:9.5px;background:#f4f4f4;border:1px solid #eee"></div>
<svg style="left:499.5px;top:26px" width="7" height="6"><path d="M0.5 1.5 H6.5 M0.5 4.5 H6.5" stroke="#222" stroke-width="1"/><path d="M0 1.5 L1.5 0 V3Z M7 4.5 L5.5 3 V6Z" fill="#222"/></svg>
<div class="t" style="left:512px;top:25px;color:#333">Stabilizer</div>
<div class="box" style="left:535px;top:24.5px;width:15px;height:8.5px;border-color:#dcdcdc"></div>
<div class="t" style="left:537px;top:25px;color:#333;letter-spacing:0px">S-7</div>
<div class="gb" style="left:549px;top:25px;width:8px;height:8px"></div>
<div class="a" style="left:552.5px;top:28.5px;width:1.5px;height:1px;background:#ddd"></div>
<div class="a" style="left:561px;top:24px;width:10px;height:9.5px;background:#f6f6f6;border:1px solid #f0f0f0"></div>
<svg style="left:563px;top:26px" width="6" height="6"><path d="M0.5 0.5 L5.5 5.5" stroke="#444" stroke-width="0.9"/></svg>

<!-- canvas view -->
<div class="a" style="left:276px;top:35px;width:524px;height:1.2px;background:#f0c4a4"></div>
<div class="a" style="left:276px;top:424px;width:524px;height:1.5px;background:#f0c4a4"></div>
<div class="a" style="left:276px;top:35px;width:1.2px;height:390px;background:#f0c4a4"></div>
<div class="a" style="left:799px;top:35px;width:1px;height:390px;background:#f0c4a4"></div>
<div class="a" style="left:277px;top:36px;width:513.5px;height:380px;background:#b0b0b0"></div>
<div class="a" style="left:384px;top:40px;width:308px;height:376px;background:#fff"></div>
<div class="a" style="left:790.5px;top:36px;width:8.5px;height:380px;background:#e8e8e8"></div>
<div class="gb" style="left:790.5px;top:36px;width:8.5px;height:8px"></div>
<div class="a" style="left:794px;top:39.5px;width:1.5px;height:1px;background:#fff"></div>
<div class="a" style="left:790.8px;top:127.3px;width:8.2px;height:169.4px;background:#969696"></div>
<div class="gb" style="left:790.5px;top:408px;width:8.5px;height:8px"></div>
<div class="a" style="left:794px;top:411.5px;width:1.5px;height:1px;background:#fff"></div>
<div class="a" style="left:277px;top:416px;width:522px;height:8px;background:#e8e8e8"></div>
<div class="gb" style="left:277px;top:416.5px;width:8px;height:7.5px"></div>
<div class="a" style="left:280.5px;top:419.5px;width:1px;height:1.5px;background:#fff"></div>
<div class="a" style="left:376px;top:416.5px;width:310px;height:7.5px;background:#969696"></div>
<div class="gb" style="left:782px;top:416.5px;width:8.5px;height:7.5px"></div>
<div class="a" style="left:786px;top:419.5px;width:1px;height:1.5px;background:#fff"></div>

<!-- tab -->
<div class="a" style="left:276px;top:426px;width:94px;height:12.5px;background:#d6d6ff;border:1px solid #c0c0fa;border-radius:1.5px"></div>
<div class="a" style="left:280px;top:428px;width:7px;height:8px;background:linear-gradient(135deg,#28a0e0 0%,#e8e040 45%,#a06020 75%,#202020 100%);border:0.8px solid #333"></div>
<div class="t" style="left:289px;top:428px;color:#444">NewCanvas2</div>
<div class="t r" style="left:339.5px;width:28.5px;top:428px;color:#444">39%</div>

<!-- status -->
<div class="lb" style="left:792px;top:426px;width:7px;height:6px;background:#dedede"></div>
<svg style="left:794px;top:428px" width="3" height="2"><path d="M0 2 L1.5 0 L3 2Z" fill="#fff"/></svg>
<div class="lb" style="left:792px;top:433px;width:7px;height:5px;background:#dedede"></div>
<svg style="left:794px;top:435px" width="3" height="2"><path d="M0 0 L1.5 2 L3 0Z" fill="#fff"/></svg>
<svg style="left:794px;top:444px" width="6" height="6"><path d="M5.5 1 L1 5.5 M5.5 3.5 L3.5 5.5" stroke="#bbb" stroke-width="0.7"/></svg>
<div class="t" style="left:587.8px;top:440.5px;color:#333">Memory Usage</div>
<div class="a" style="left:627px;top:440px;width:64px;height:9px;background:#f4f4f4;border:1px solid #d8d8d8"></div>
<div class="a" style="left:627.5px;top:440.5px;width:8px;height:8px;background:#3cd080"></div>
<div class="a" style="left:635.5px;top:440.5px;width:0.8px;height:8px;background:#5060e0"></div>
<div class="t" style="left:628.3px;top:440.5px;color:#333">12% (13%)</div>
<div class="t" style="left:694.8px;top:440.5px;color:#333">Drive Space</div>
<div class="a" style="left:726.5px;top:440px;width:64px;height:9.5px;background:#f4f4f4;border:1px solid #d8d8d8"></div>
<div class="a" style="left:727px;top:440.5px;width:55px;height:8.5px;background:#3cbcf4"></div>
<div class="t" style="left:728px;top:440.5px;color:#333">88%</div>


</body></html>
